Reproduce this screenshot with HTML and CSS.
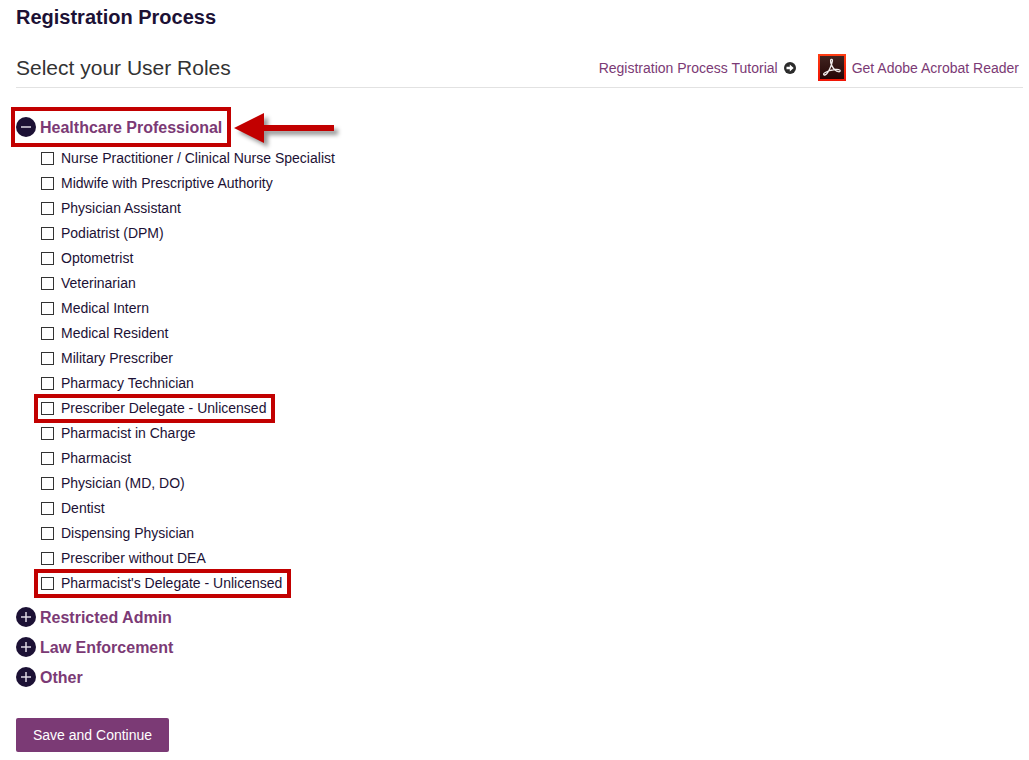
FILE: index.html
```html
<!DOCTYPE html>
<html lang="en">
<head>
<meta charset="utf-8">
<meta name="viewport" content="width=device-width, initial-scale=1">
<title>Registration Process</title>
<link rel="stylesheet" href="styles.css">
</head>
<body>
<main class="page">
  <h1 class="page-title">Registration Process</h1>
  <header class="section-head">
    <h2 class="section-title">Select your User Roles</h2>
    <nav class="help-links">
      <a class="help-link" href="#">Registration Process Tutorial
        <svg class="go-icon" viewBox="0 0 12 12" aria-hidden="true"><circle cx="6" cy="6" r="6" fill="#2b2b2b"/><path d="M2.500 4.800h3.300V2.500L9.700 6 5.800 9.500V7.200H2.500z" fill="#fff"/></svg>
      </a>
      <a class="help-link" href="#">
        <svg class="pdf-icon" viewBox="0 0 28 27" aria-hidden="true">
          <defs><linearGradient id="pdf-edge" x1="0" y1="0" x2="0" y2="1"><stop offset="0" stop-color="#ff3d14"/><stop offset="1" stop-color="#f01505"/></linearGradient>
          <linearGradient id="pdf-fill" x1="0" y1="0" x2="0" y2="1"><stop offset="0" stop-color="#40231f"/><stop offset="1" stop-color="#250606"/></linearGradient></defs>
          <rect width="28" height="27" fill="url(#pdf-edge)"/>
          <rect x="2" y="2" width="24" height="23" fill="url(#pdf-fill)"/>
          <path d="M12.600 6.300C12.800 4.800 14.800 5 14.400 6.900C14.100 9 13.300 11.800 11.900 14.500C10.600 17.300 8.700 20.600 6.900 21C5.300 21.200 5.100 19.700 6.800 18.700C9.200 17.200 13.500 15.900 17.200 15.500C19.600 15.200 22.400 15.500 22.200 16.900C21.900 18.400 19.300 17.900 17 16C14.800 14.200 12.200 9.400 12.600 6.300Z" fill="none" stroke="#f4efee" stroke-width="1.300"/>
        </svg>
        Get Adobe Acrobat Reader</a>
    </nav>
  </header>

  <form class="roles" action="#">
    <section class="group">
      <h3 class="group-head">
        <button class="group-toggle marked marked-group" type="button" aria-expanded="true">
          <svg class="toggle-icon" viewBox="0 0 20 20" aria-hidden="true"><circle cx="10" cy="10" r="10" fill="#1c1135"/><path d="M5 10h10" stroke="#ddd8e4" stroke-width="1.500"/></svg>
          Healthcare Professional</button>
        <svg class="pointer" viewBox="0 0 112 40" aria-hidden="true"><path d="M2 20 32 5v12h70v6H32v12z" fill="#c20000"/></svg>
      </h3>
      <ul class="role-list">
        <li><label class="role"><input type="checkbox">Nurse Practitioner / Clinical Nurse Specialist</label></li>
        <li><label class="role"><input type="checkbox">Midwife with Prescriptive Authority</label></li>
        <li><label class="role"><input type="checkbox">Physician Assistant</label></li>
        <li><label class="role"><input type="checkbox">Podiatrist (DPM)</label></li>
        <li><label class="role"><input type="checkbox">Optometrist</label></li>
        <li><label class="role"><input type="checkbox">Veterinarian</label></li>
        <li><label class="role"><input type="checkbox">Medical Intern</label></li>
        <li><label class="role"><input type="checkbox">Medical Resident</label></li>
        <li><label class="role"><input type="checkbox">Military Prescriber</label></li>
        <li><label class="role"><input type="checkbox">Pharmacy Technician</label></li>
        <li><label class="role marked marked-role"><input type="checkbox">Prescriber Delegate - Unlicensed</label></li>
        <li><label class="role"><input type="checkbox">Pharmacist in Charge</label></li>
        <li><label class="role"><input type="checkbox">Pharmacist</label></li>
        <li><label class="role"><input type="checkbox">Physician (MD, DO)</label></li>
        <li><label class="role"><input type="checkbox">Dentist</label></li>
        <li><label class="role"><input type="checkbox">Dispensing Physician</label></li>
        <li><label class="role"><input type="checkbox">Prescriber without DEA</label></li>
        <li><label class="role marked marked-role"><input type="checkbox">Pharmacist's Delegate - Unlicensed</label></li>
      </ul>
    </section>
    <section class="group">
      <h3 class="group-head"><button class="group-toggle" type="button" aria-expanded="false">
        <svg class="toggle-icon" viewBox="0 0 20 20" aria-hidden="true"><circle cx="10" cy="10" r="10" fill="#1c1135"/><path d="M5 10h10M10 5v10" stroke="#ddd8e4" stroke-width="1.500"/></svg>
        Restricted Admin</button></h3>
    </section>
    <section class="group">
      <h3 class="group-head"><button class="group-toggle" type="button" aria-expanded="false">
        <svg class="toggle-icon" viewBox="0 0 20 20" aria-hidden="true"><circle cx="10" cy="10" r="10" fill="#1c1135"/><path d="M5 10h10M10 5v10" stroke="#ddd8e4" stroke-width="1.500"/></svg>
        Law Enforcement</button></h3>
    </section>
    <section class="group">
      <h3 class="group-head"><button class="group-toggle" type="button" aria-expanded="false">
        <svg class="toggle-icon" viewBox="0 0 20 20" aria-hidden="true"><circle cx="10" cy="10" r="10" fill="#1c1135"/><path d="M5 10h10M10 5v10" stroke="#ddd8e4" stroke-width="1.500"/></svg>
        Other</button></h3>
    </section>
    <button class="save" type="submit">Save and Continue</button>
  </form>
</main>
</body>
</html>
```
FILE: styles.css
```css
* { box-sizing: border-box; }

body {
  margin: 0;
  background: #fff;
  color: #1c1135;
  font: 14px/20px "Liberation Sans", Arial, sans-serif;
}

.page { padding: 0 6px 8px 16px; }

.page-title {
  margin: 0;
  font-size: 20px;
  line-height: 34px;
}

.section-head {
  display: flex;
  justify-content: space-between;
  align-items: center;
  margin-top: 14px;
  border-bottom: 1px solid #e2e2e2;
}

.section-title {
  margin: 0;
  padding-top: 1px;
  color: #333;
  font-size: 21px;
  font-weight: 400;
  line-height: 38px;
}

.help-links {
  display: flex;
  gap: 22px;
  padding-right: 4px;
}

.help-link {
  display: flex;
  align-items: center;
  gap: 6px;
  color: #7b3a75;
  text-decoration: none;
}

.go-icon { width: 12px; height: 12px; }
.pdf-icon { width: 28px; height: 27px; }

.roles { padding-top: 25px; }

.group-head {
  display: flex;
  align-items: center;
  margin: 0;
  height: 30px;
}

.group-toggle {
  display: flex;
  align-items: center;
  gap: 4px;
  padding: 0;
  border: 0;
  background: none;
  color: #7b3a75;
  font: bold 16px/30px "Liberation Sans", Arial, sans-serif;
  cursor: pointer;
}

.toggle-icon {
  width: 20px;
  height: 20px;
  margin-bottom: 2px;
}

.role-list {
  margin: 0 0 7px;
  padding: 3px 0 0 25px;
  list-style: none;
}

.role-list li { display: flex; }

.role {
  display: flex;
  align-items: center;
  gap: 7px;
  line-height: 25px;
}

.role input {
  appearance: none;
  width: 13px;
  height: 13px;
  margin: 0;
  border: 1px solid #333;
  background: #fff;
}

.role input:checked { background: #7b3a75; }

.marked { position: relative; }

.marked::after {
  content: "";
  position: absolute;
  border: 4px solid #c20000;
  pointer-events: none;
}

.marked-group::after { inset: -6px -9px -4px -5px; }
.marked-role::after { inset: -2px -9px -2px -7px; }

.pointer {
  width: 112px;
  height: 40px;
  margin-left: 10px;
  filter: drop-shadow(4px 4px 2px rgba(0, 0, 0, 0.4));
}

.save {
  margin-top: 25px;
  padding: 7px 17px;
  border: 0;
  border-radius: 2px;
  background: #7b3a75;
  color: #fff;
  font: 14px/20px "Liberation Sans", Arial, sans-serif;
  cursor: pointer;
}
```
